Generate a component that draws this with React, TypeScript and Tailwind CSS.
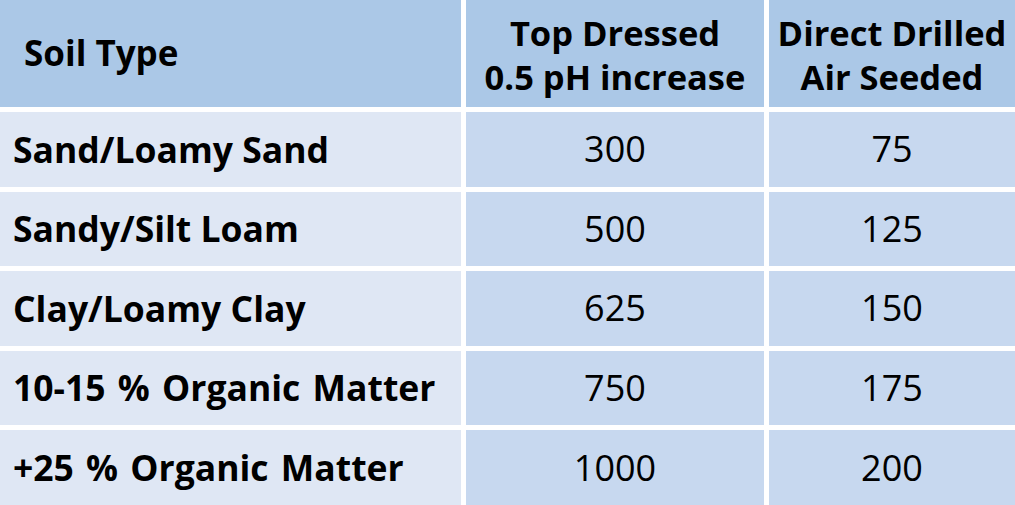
import React from "react";

const rows: [string, string, string][] = [
  ["Sand/Loamy Sand", "300", "75"],
  ["Sandy/Silt Loam", "500", "125"],
  ["Clay/Loamy Clay", "625", "150"],
  ["10-15 % Organic Matter", "750", "175"],
  ["+25 % Organic Matter", "1000", "200"],
];

export default function App() {
  return (
    <div
      className="w-[1015px] h-[505px] bg-white grid grid-cols-[461px_298px_246px] grid-rows-[107px_repeat(5,1fr)] gap-[5px] text-black"
      style={{ fontFamily: '"Open Sans", "Noto Sans", sans-serif' }}
    >
      <div className="bg-[#abc8e7] flex items-center pl-[24px] text-[35px] font-bold">
        Soil Type
      </div>
      <div className="bg-[#abc8e7] flex flex-col items-center justify-center text-[34.5px] font-bold leading-[44px] pt-[2px]">
        <span>Top Dressed</span>
        <span>0.5 pH increase</span>
      </div>
      <div className="bg-[#abc8e7] flex flex-col items-center justify-center text-[34.5px] font-bold leading-[44px] pt-[2px]">
        <span>Direct Drilled</span>
        <span>Air Seeded</span>
      </div>
      {rows.map(([a, b, c]) => (
        <React.Fragment key={a}>
          <div
            className={
              a.includes("%")
                ? "bg-[#dfe7f4] flex items-center pl-[13px] text-[35.5px] font-bold [word-spacing:3px]"
                : "bg-[#dfe7f4] flex items-center pl-[13px] text-[35.5px] font-bold"
            }
          >
            {a}
          </div>
          <div className="bg-[#c7d8ef] flex items-center justify-center text-[36px]">
            {b}
          </div>
          <div className="bg-[#c7d8ef] flex items-center justify-center text-[36px]">
            {c}
          </div>
        </React.Fragment>
      ))}
    </div>
  );
}
